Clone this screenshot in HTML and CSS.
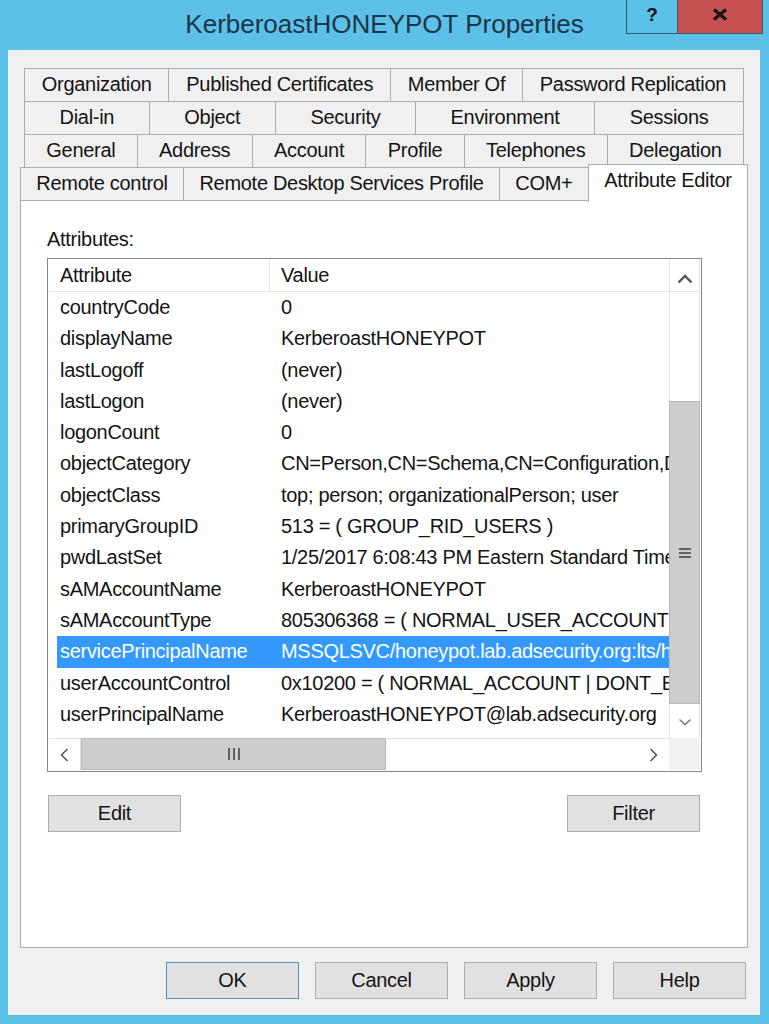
FILE: index.html
```html
<!DOCTYPE html>
<html>
<head>
<meta charset="utf-8">
<title>KerberoastHONEYPOT Properties</title>
<link rel="stylesheet" href="styles.css">
</head>
<body>
<div class="window">
  <header class="titlebar">
    <div class="spacer"></div>
    <h1 class="title">KerberoastHONEYPOT Properties</h1>
    <div class="caption-btns">
      <div class="cap help">?</div>
      <div class="cap close">
        <svg width="16" height="13" viewBox="0 0 16 13"><path d="M2 1.5 L14 11.5 M14 1.5 L2 11.5" stroke="#161616" stroke-width="3.4" fill="none"/></svg>
      </div>
    </div>
  </header>

  <div class="dialog">
    <div class="tabs">
      <div class="tab-row back">
        <div class="tab">Organization</div>
        <div class="tab">Published Certificates</div>
        <div class="tab">Member Of</div>
        <div class="tab">Password Replication</div>
      </div>
      <div class="tab-row back">
        <div class="tab">Dial-in</div>
        <div class="tab">Object</div>
        <div class="tab">Security</div>
        <div class="tab">Environment</div>
        <div class="tab">Sessions</div>
      </div>
      <div class="tab-row back">
        <div class="tab">General</div>
        <div class="tab">Address</div>
        <div class="tab">Account</div>
        <div class="tab">Profile</div>
        <div class="tab">Telephones</div>
        <div class="tab">Delegation</div>
      </div>
      <div class="tab-row front">
        <div class="tab">Remote control</div>
        <div class="tab">Remote Desktop Services Profile</div>
        <div class="tab">COM+</div>
        <div class="tab active">Attribute Editor</div>
      </div>
    </div>

    <div class="panel">
      <div class="label">Attributes:</div>
      <div class="listbox">
        <div class="viewport">
          <div class="lv-header">
            <div class="hcell hcol1">Attribute</div>
            <div class="hcell hcol2">Value</div>
          </div>
          <div class="lv-row"><div class="c1">countryCode</div><div class="c2">0</div></div>
          <div class="lv-row"><div class="c1">displayName</div><div class="c2">KerberoastHONEYPOT</div></div>
          <div class="lv-row"><div class="c1">lastLogoff</div><div class="c2">(never)</div></div>
          <div class="lv-row"><div class="c1">lastLogon</div><div class="c2">(never)</div></div>
          <div class="lv-row"><div class="c1">logonCount</div><div class="c2">0</div></div>
          <div class="lv-row"><div class="c1">objectCategory</div><div class="c2">CN=Person,CN=Schema,CN=Configuration,DC=lab,DC=adsecurity,DC=org</div></div>
          <div class="lv-row"><div class="c1">objectClass</div><div class="c2">top; person; organizationalPerson; user</div></div>
          <div class="lv-row"><div class="c1">primaryGroupID</div><div class="c2">513 = ( GROUP_RID_USERS )</div></div>
          <div class="lv-row"><div class="c1">pwdLastSet</div><div class="c2">1/25/2017 6:08:43 PM Eastern Standard Time</div></div>
          <div class="lv-row"><div class="c1">sAMAccountName</div><div class="c2">KerberoastHONEYPOT</div></div>
          <div class="lv-row"><div class="c1">sAMAccountType</div><div class="c2">805306368 = ( NORMAL_USER_ACCOUNT )</div></div>
          <div class="lv-row selected"><div class="c1">servicePrincipalName</div><div class="c2">MSSQLSVC/honeypot.lab.adsecurity.org:lts/honeypot</div></div>
          <div class="lv-row"><div class="c1">userAccountControl</div><div class="c2">0x10200 = ( NORMAL_ACCOUNT | DONT_EXPIRE_PASSWORD )</div></div>
          <div class="lv-row"><div class="c1">userPrincipalName</div><div class="c2">KerberoastHONEYPOT@lab.adsecurity.org</div></div>
        </div>

        <div class="vscroll">
          <div class="arrow up">
            <svg width="16" height="10" viewBox="0 0 16 10"><path d="M1.5 8.5 L8 2 L14.5 8.5" stroke="#555" stroke-width="2.4" fill="none"/></svg>
          </div>
          <div class="track"></div>
          <div class="thumb v">
            <svg width="14" height="12" viewBox="0 0 14 12"><path d="M1 2 H13 M1 6 H13 M1 10 H13" stroke="#606060" stroke-width="2" fill="none"/></svg>
          </div>
          <div class="arrow down">
            <svg width="14" height="8" viewBox="0 0 14 8"><path d="M1.5 1.5 L7 6.5 L12.5 1.5" stroke="#707070" stroke-width="1.4" fill="none"/></svg>
          </div>
        </div>

        <div class="hscroll">
          <div class="harrow left">
            <svg width="9" height="14" viewBox="0 0 9 14"><path d="M7.5 1 L1.5 7 L7.5 13" stroke="#505050" stroke-width="1.5" fill="none"/></svg>
          </div>
          <div class="thumb h">
            <svg width="14" height="12" viewBox="0 0 14 12"><path d="M2 0 V12 M7 0 V12 M12 0 V12" stroke="#606060" stroke-width="2" fill="none"/></svg>
          </div>
          <div class="htrack"></div>
          <div class="harrow right">
            <svg width="9" height="14" viewBox="0 0 9 14"><path d="M1.5 1 L7.5 7 L1.5 13" stroke="#505050" stroke-width="1.5" fill="none"/></svg>
          </div>
        </div>

        <div class="corner"></div>
      </div>

      <div class="panel-buttons">
        <div class="btn">Edit</div>
        <div class="btn">Filter</div>
      </div>
    </div>

    <div class="dialog-buttons">
      <div class="btn default">OK</div>
      <div class="btn">Cancel</div>
      <div class="btn">Apply</div>
      <div class="btn">Help</div>
    </div>
  </div>
</div>
</body>
</html>
```

FILE: styles.css
```css
* { box-sizing: border-box; }

html, body {
  margin: 0;
  padding: 0;
}

body {
  background: #5bc1e8;
  font-family: "Liberation Sans", Arial, sans-serif;
  color: #141414;
}

.window {
  width: 769px;
  height: 1024px;
  background: #5bc1e8;
  display: flex;
  flex-direction: column;
}

/* ---------- title bar ---------- */
.titlebar {
  height: 50px;
  display: grid;
  grid-template-columns: 1fr auto 1fr;
  align-items: start;
}

.title {
  margin: 0;
  font-weight: normal;
  font-size: 26px;
  line-height: 48px;
  color: #1b3546;
  white-space: nowrap;
  letter-spacing: 0;
}

.caption-btns {
  justify-self: end;
  display: flex;
  margin-right: 6px;
}

.cap {
  height: 34px;
  display: flex;
  align-items: center;
  justify-content: center;
  border: 1px solid #3d5866;
  border-top: none;
}

.cap.help {
  width: 52px;
  font-size: 19px;
  font-weight: bold;
  color: #121212;
  padding-bottom: 4px;
}

.cap.close {
  width: 85px;
  background: #c75050;
  border-left: none;
  padding-bottom: 4px;
}

/* ---------- dialog ---------- */
.dialog {
  height: 965px;
  margin: 0 9px 9px 8px;
  background: #f0f0f0;
  padding: 18px 12px 0 12px;
  display: flex;
  flex-direction: column;
}

/* ---------- tabs ---------- */
.tabs {
  display: flex;
  flex-direction: column;
}

.tab-row {
  display: flex;
  height: 34px;
  margin-top: -1px;
}

.tab-row:first-child { margin-top: 0; }

.tab-row.back {
  margin-left: 4px;
  margin-right: 4px;
}

.tab {
  flex: 1 1 auto;
  height: 34px;
  display: flex;
  align-items: center;
  justify-content: center;
  border: 1px solid #adadad;
  margin-left: -1px;
  background: #f0f0f0;
  font-size: 20px;
  letter-spacing: -0.3px;
  white-space: nowrap;
  padding: 0 4px 1px 4px;
  color: #141414;
}

.tab:first-child { margin-left: 0; }

.tab.active {
  align-self: flex-end;
  height: 38px;
  margin-bottom: -1px;
  background: #ffffff;
  border-bottom: none;
  position: relative;
  z-index: 2;
  padding-bottom: 6px;
}

/* ---------- panel ---------- */
.panel {
  height: 748px;
  margin-top: -1px;
  background: #ffffff;
  border: 1px solid #adadad;
  padding: 27px 45px 0 26px;
  display: flex;
  flex-direction: column;
}

.label {
  font-size: 20px;
  letter-spacing: -0.3px;
  line-height: 22px;
  margin-bottom: 8px;
  padding-left: 0;
}

.listbox {
  border: 1px solid #828790;
  padding: 1px;
  display: grid;
  grid-template-columns: 1fr 31px;
  grid-template-rows: 478px 32px;
  background: #ffffff;
}

.viewport {
  grid-column: 1;
  grid-row: 1;
  overflow: hidden;
  font-size: 20px;
  letter-spacing: -0.3px;
}

.lv-header {
  display: flex;
  height: 32px;
  border-bottom: 1px solid #e5e5e5;
}

.hcell {
  line-height: 30px;
  padding-left: 11px;
  white-space: nowrap;
}

.hcol1 {
  width: 221px;
  flex: none;
  border-right: 1px solid #e5e5e5;
}

.hcol2 { flex: 1; }

.lv-row {
  display: flex;
  height: 31.3px;
  line-height: 31px;
  margin-left: 8px;
  white-space: nowrap;
  color: #141414;
}

.lv-row .c1 {
  width: 213px;
  flex: none;
  padding-left: 3px;
}

.lv-row .c2 {
  padding-left: 11px;
}

.lv-row.selected {
  background: #3399ff;
  color: #ffffff;
}

/* vertical scrollbar */
.vscroll {
  grid-column: 2;
  grid-row: 1;
  display: flex;
  flex-direction: column;
  background: #ffffff;
  border-left: 1px solid #e3e3e3;
  border-right: 1px solid #e3e3e3;
}

.arrow {
  display: flex;
  align-items: center;
  justify-content: center;
  flex: none;
}

.arrow.up {
  height: 32px;
  padding-top: 6px;
  border-bottom: 1px solid #e3e3e3;
}

.track { height: 109px; flex: none; }

.thumb {
  background: #cdcdcd;
  border: 1px solid #b9b9b9;
  display: flex;
  align-items: center;
  justify-content: center;
}

.thumb.v {
  height: 303px;
  margin: 0 -1px;
  flex: none;
}

.arrow.down {
  flex: 1;
  padding-top: 2px;
}

/* horizontal scrollbar */
.hscroll {
  grid-column: 1;
  grid-row: 2;
  display: flex;
  border-top: 1px solid #e3e3e3;
  background: #ffffff;
}

.harrow {
  width: 32px;
  flex: none;
  display: flex;
  align-items: center;
  justify-content: center;
}

.harrow.left { border-right: 1px solid #e3e3e3; }

.thumb.h {
  width: 305px;
  flex: none;
  margin: -1px 0 0 0;
}

.htrack { flex: 1; }

.corner {
  grid-column: 2;
  grid-row: 2;
  background: #f0f0f0;
}

/* buttons */
.panel-buttons {
  display: flex;
  justify-content: space-between;
  margin-top: 23px;
  padding: 0 2px 0 1px;
}

.btn {
  width: 133px;
  height: 37px;
  background: #e1e1e1;
  border: 1px solid #adadad;
  display: flex;
  align-items: center;
  justify-content: center;
  font-size: 20px;
  letter-spacing: -0.3px;
  color: #141414;
  padding-bottom: 1px;
}

.btn.default {
  border-color: #4f8fc8;
}

.dialog-buttons {
  display: flex;
  justify-content: flex-end;
  gap: 16px;
  margin-top: 14px;
  padding-right: 2px;
}
```
